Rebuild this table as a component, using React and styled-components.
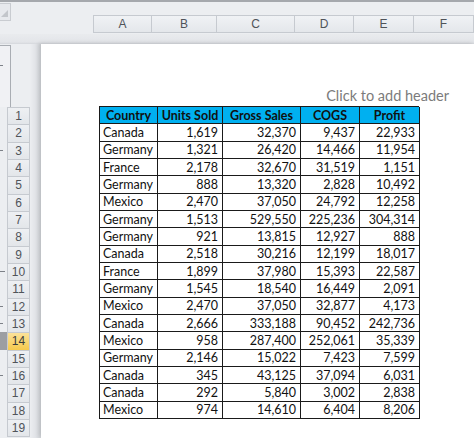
import React from 'react';
import styled, { createGlobalStyle } from 'styled-components';

const GlobalStyle = createGlobalStyle`
  html, body {
    margin: 0;
    padding: 0;
    background: #eceef1;
    overflow: hidden;
  }
`;

const COLS = [
  { label: 'A', width: 58 },
  { label: 'B', width: 65 },
  { label: 'C', width: 78 },
  { label: 'D', width: 59 },
  { label: 'E', width: 60 },
  { label: 'F', width: 60 }
];

const HEADERS = ['Country', 'Units Sold', 'Gross Sales', 'COGS', 'Profit'];

const ROWS = [
  ['Canada', '1,619', '32,370', '9,437', '22,933'],
  ['Germany', '1,321', '26,420', '14,466', '11,954'],
  ['France', '2,178', '32,670', '31,519', '1,151'],
  ['Germany', '888', '13,320', '2,828', '10,492'],
  ['Mexico', '2,470', '37,050', '24,792', '12,258'],
  ['Germany', '1,513', '529,550', '225,236', '304,314'],
  ['Germany', '921', '13,815', '12,927', '888'],
  ['Canada', '2,518', '30,216', '12,199', '18,017'],
  ['France', '1,899', '37,980', '15,393', '22,587'],
  ['Germany', '1,545', '18,540', '16,449', '2,091'],
  ['Mexico', '2,470', '37,050', '32,877', '4,173'],
  ['Canada', '2,666', '333,188', '90,452', '242,736'],
  ['Mexico', '958', '287,400', '252,061', '35,339'],
  ['Germany', '2,146', '15,022', '7,423', '7,599'],
  ['Canada', '345', '43,125', '37,094', '6,031'],
  ['Canada', '292', '5,840', '3,002', '2,838'],
  ['Mexico', '974', '14,610', '6,404', '8,206']
];

const ROW_H = 17.33;
const ACTIVE_ROW = 14;

const Screen = styled.div`
  width: 474px;
  height: 438px;
  display: flex;
  flex-direction: column;
  overflow: hidden;
  font-family: 'Liberation Sans', Arial, sans-serif;
`;

const TopEdge = styled.div`
  height: 2px;
  background: #a5a8ad;
`;

const HeaderBar = styled.div`
  height: 31px;
  display: flex;
  align-items: flex-start;
  padding-top: 1px;
`;

const Corner = styled.div`
  width: 16px;
  height: 18px;
  border: 1px solid #c9ccd1;
  border-left: none;
  background: #e7e9ed;
  display: flex;
  align-items: flex-end;
  justify-content: flex-end;
  padding: 0 2px 3px 0;
  box-sizing: border-box;
`;

const ColHeaders = styled.div`
  display: flex;
  margin: 12px 0 0 82px;
  height: 18px;
  border-top: 1px solid #c6cad0;
  border-bottom: 1px solid #c6cad0;
  border-left: 1px solid #c6cad0;
  box-sizing: border-box;
`;

const ColHeader = styled.div`
  width: ${p => p.$w}px;
  flex-shrink: 0;
  box-sizing: border-box;
  border-right: 1px solid #c6cad0;
  background: linear-gradient(#f0f2f5, #e4e7eb);
  color: #4f5359;
  font-size: 12px;
  display: flex;
  align-items: center;
  justify-content: center;
`;

const Band = styled.div`
  height: 10px;
  background: linear-gradient(#e9ebee, #e3e5e9 80%, #d4d7dc);
`;

const Body = styled.div`
  flex: 1;
  display: flex;
  min-height: 0;
`;

const Gutter = styled.div`
  width: 41px;
  flex-shrink: 0;
  display: flex;
  flex-direction: column;
  background: linear-gradient(90deg, #eceef1 30px, #e2e4e8 35px, #d3d6da 41px);
`;

const RulerBox = styled.div`
  width: 11px;
  height: 62px;
  margin-top: 1px;
  box-sizing: border-box;
  border-top: 1px solid #a9adb3;
  border-right: 1px solid #a9adb3;
  background: #f0f1f4;
  display: flex;
  flex-direction: column;
`;

const Tick = styled.div`
  width: ${p => p.$w || 3}px;
  height: 1px;
  background: #7d8188;
  margin-top: ${p => p.$top}px;
`;

const RowArea = styled.div`
  display: flex;
`;

const RulerStrip = styled.div`
  width: 7px;
  display: flex;
  flex-direction: column;
`;

const RulerMark = styled.div`
  height: ${ROW_H}px;
  width: 7px;
  background: ${p => (p.$on ? '#9c9ea2' : 'transparent')};
  display: flex;
  align-items: center;
`;

const RowHeaders = styled.div`
  width: 23px;
  display: flex;
  flex-direction: column;
  border-top: 1px solid #c6cad0;
`;

const RowHeader = styled.div`
  height: ${ROW_H}px;
  box-sizing: border-box;
  border: 1px solid #c6cad0;
  border-top: none;
  background: ${p => (p.$on ? 'linear-gradient(#fbe29a, #f6c94c)' : 'linear-gradient(#eef0f3, #e3e6ea)')};
  color: ${p => (p.$on ? '#3c3c3c' : '#50545a')};
  font-size: 12px;
  display: flex;
  align-items: center;
  justify-content: center;
`;

const Page = styled.div`
  flex: 1;
  background: #ffffff;
  box-shadow: -2px -1px 4px rgba(0, 0, 0, 0.12);
  display: flex;
  flex-direction: column;
  font-family: Lato, 'Open Sans', sans-serif;
`;

const PageHeader = styled.div`
  height: 62px;
  display: flex;
  align-items: flex-end;
  justify-content: flex-end;
  padding-right: 25px;
  box-sizing: border-box;
  color: #7b7b7b;
  font-size: 14.5px;
  line-height: 18px;
  padding-bottom: 1px;
`;

const Table = styled.div`
  margin-left: 58px;
  display: grid;
  grid-template-columns: 58px 65px 78px 59px 60px;
  grid-auto-rows: ${ROW_H}px;
  width: 320px;
  box-sizing: border-box;
  border-top: 1px solid #1a1a1a;
  border-left: 1px solid #1a1a1a;
`;

const Cell = styled.div`
  box-sizing: border-box;
  border-right: 1px solid #1a1a1a;
  border-bottom: 1px solid #1a1a1a;
  font-size: 12.5px;
  color: #111;
  display: flex;
  align-items: center;
  white-space: nowrap;
  padding: 0 4px 0 3px;
  justify-content: ${p => (p.$num ? 'flex-end' : 'flex-start')};
`;

const HeadCell = styled(Cell)`
  background: #00b0f0;
  font-weight: 700;
  justify-content: center;
  padding: 0;
`;

export default function App() {
  return (
    <Screen>
      <GlobalStyle />
      <TopEdge />
      <HeaderBar>
        <Corner>
          <svg width="7" height="7" viewBox="0 0 7 7">
            <path d="M7 0 L7 7 L0 7 Z" fill="#c3c6cb" />
          </svg>
        </Corner>
        <ColHeaders>
          {COLS.map(c => (
            <ColHeader key={c.label} $w={c.width}>{c.label}</ColHeader>
          ))}
        </ColHeaders>
      </HeaderBar>
      <Band />
      <Body>
        <Gutter>
          <RulerBox>
            <Tick $top={19} />
          </RulerBox>
          <RowArea>
            <RulerStrip>
              {Array.from({ length: 19 }, (_, i) => (
                <RulerMark key={i} $on={i + 1 === ACTIVE_ROW}>
                  {[3, 10, 12, 13, 16].includes(i + 1) && <Tick $top={0} $w={i + 1 === 10 ? 5 : 3} />}
                </RulerMark>
              ))}
            </RulerStrip>
            <RowHeaders>
              {Array.from({ length: 19 }, (_, i) => (
                <RowHeader key={i} $on={i + 1 === ACTIVE_ROW}>{i + 1}</RowHeader>
              ))}
            </RowHeaders>
          </RowArea>
        </Gutter>
        <Page>
          <PageHeader>Click to add header</PageHeader>
          <Table>
            {HEADERS.map(h => (
              <HeadCell key={h}>{h}</HeadCell>
            ))}
            {ROWS.map((row, r) =>
              row.map((v, c) => (
                <Cell key={`${r}-${c}`} $num={c > 0}>{v}</Cell>
              ))
            )}
          </Table>
        </Page>
      </Body>
    </Screen>
  );
}
